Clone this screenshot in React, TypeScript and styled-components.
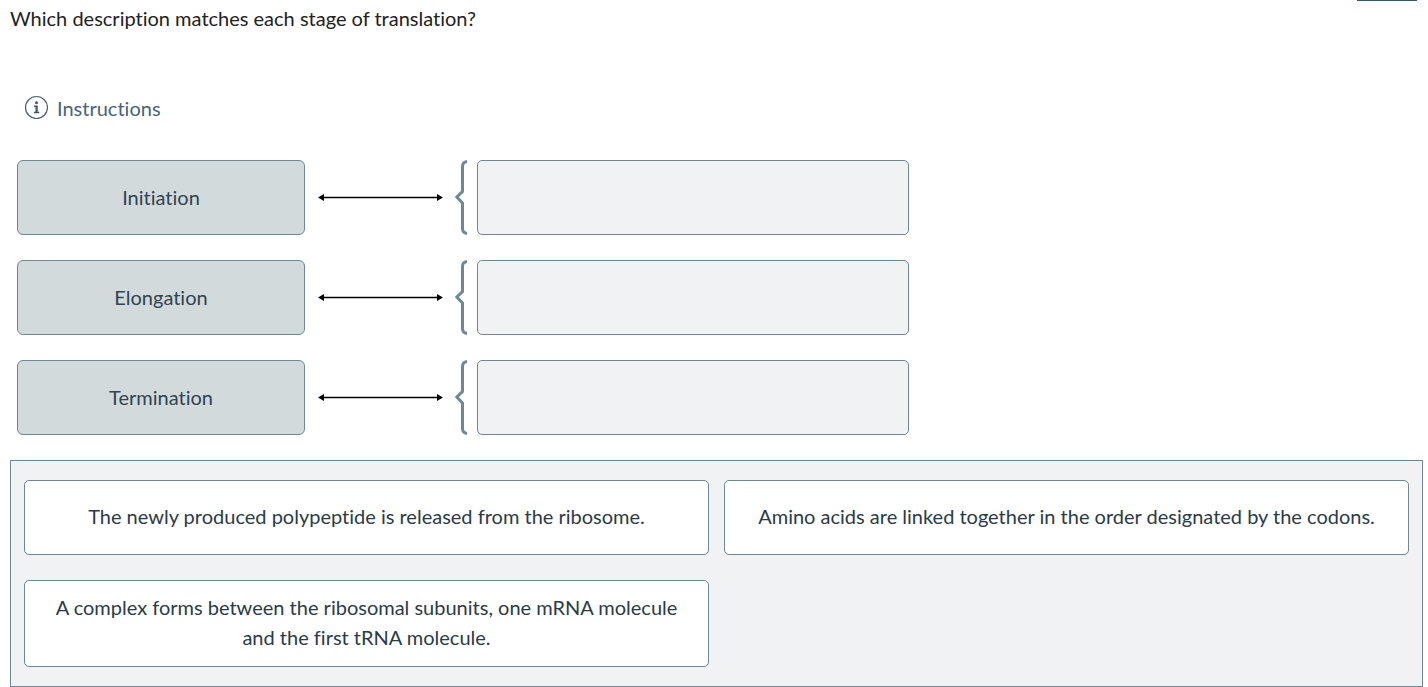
import React from 'react';
import styled, { createGlobalStyle } from 'styled-components';

const GlobalStyle = createGlobalStyle`
  *, *::before, *::after { box-sizing: border-box; }
  body {
    margin: 0;
    background: #fff;
    color: #2b3b47;
    font-family: Lato, "Liberation Sans", sans-serif;
    font-size: 20px;
    font-variant-ligatures: none;
    line-height: 30px;
  }
`;

const Page = styled.main`
  padding: 0 5px 0 10px;
`;

const TopEdge = styled.div`
  display: flex;
  justify-content: flex-end;
  height: 3px;
  padding-right: 6px;
`;

const ButtonEdge = styled.div`
  width: 60px;
  height: 1px;
  background: #35596b;
`;

const Question = styled.h1`
  margin: 0;
  font-size: 20px;
  font-weight: 400;
  line-height: 30px;
  color: #222;
`;

const InstructionsButton = styled.button`
  display: flex;
  align-items: center;
  gap: 9px;
  margin: 60px 0 0 14px;
  padding: 0;
  border: 0;
  background: none;
  color: #47637a;
  font: inherit;
  font-variant-ligatures: none;
  cursor: pointer;
`;

const InfoSvg = styled.svg`
  display: block;
  width: 24px;
  height: 24px;
  margin-bottom: 2px;
`;

const Stages = styled.section`
  display: flex;
  flex-direction: column;
  gap: 25px;
  margin: 37px 0 25px 7px;
`;

const StageRow = styled.div`
  display: grid;
  grid-template-columns: minmax(0, 288px) 130px 12px minmax(0, 432px);
  align-items: center;
  column-gap: 10px;
`;

const StageLabel = styled.div`
  display: flex;
  align-items: center;
  justify-content: center;
  height: 75px;
  padding-bottom: 2px;
  border: 1px solid #6f8894;
  border-radius: 6px;
  background: #d3dadc;
  color: #304452;
`;

const DropZone = styled.div`
  height: 75px;
  border: 1px solid #6f8894;
  border-radius: 5px;
  background: #f1f2f4;
`;

const Drawing = styled.svg`
  display: block;
  justify-self: center;
`;

const Bank = styled.section`
  display: grid;
  grid-template-columns: 1fr 1fr;
  align-items: start;
  gap: 25px 15px;
  padding: 19px 13px;
  border: 1px solid #6f8894;
  background: #f1f2f4;
`;

const AnswerCard = styled.button`
  display: flex;
  align-items: center;
  justify-content: center;
  min-height: 75px;
  padding: 11px 30px 14px;
  border: 1px solid #6f8894;
  border-radius: 5px;
  background: #fff;
  color: #2b3b47;
  font: inherit;
  font-variant-ligatures: none;
  text-align: center;
  cursor: grab;
`;

const InfoIcon = () => (
  <InfoSvg viewBox="0 0 24 24" aria-hidden="true">
    <circle cx="12.5" cy="12.5" r="11" fill="none" stroke="#47616e" strokeWidth="1.2" />
    <circle cx="12.5" cy="7.7" r="1.5" fill="#3c5766" />
    <path d="M10 10.500h3.700v6.300h1.500v1.500H9.900v-1.500h1.600v-4.800H10z" fill="#3c5766" />
  </InfoSvg>
);

const Arrow = () => (
  <Drawing width="126" height="75" viewBox="0 0 126 75" aria-hidden="true">
    <path d="M5 37.500h116" stroke="#000" strokeWidth="1.6" />
    <path d="M1 37.500l6-3.500v7zM126 37.500l-6-3.500v7z" fill="#000" />
  </Drawing>
);

const Brace = () => (
  <Drawing width="12" height="75" viewBox="0 0 12 75" aria-hidden="true">
    <path
      d="M12 1.500Q7.500 2 7.500 6.500V31.500L1.800 37L7.500 43V68.500Q7.500 73 12 73.500"
      fill="none"
      stroke="#6f8894"
      strokeWidth="3"
    />
  </Drawing>
);

const stages = ['Initiation', 'Elongation', 'Termination'];

const answers = [
  'The newly produced polypeptide is released from the ribosome.',
  'Amino acids are linked together in the order designated by the codons.',
  'A complex forms between the ribosomal subunits, one mRNA molecule and the first tRNA molecule.',
];

export default function App() {
  return (
    <>
      <GlobalStyle />
      <Page>
        <TopEdge>
          <ButtonEdge />
        </TopEdge>
        <Question>Which description matches each stage of translation?</Question>
        <InstructionsButton type="button">
          <InfoIcon />
          Instructions
        </InstructionsButton>
        <Stages>
          {stages.map((stage) => (
            <StageRow key={stage}>
              <StageLabel>{stage}</StageLabel>
              <Arrow />
              <Brace />
              <DropZone role="group" aria-label={`Description of ${stage}`} />
            </StageRow>
          ))}
        </Stages>
        <Bank>
          {answers.map((answer) => (
            <AnswerCard type="button" key={answer}>
              {answer}
            </AnswerCard>
          ))}
        </Bank>
      </Page>
    </>
  );
}
